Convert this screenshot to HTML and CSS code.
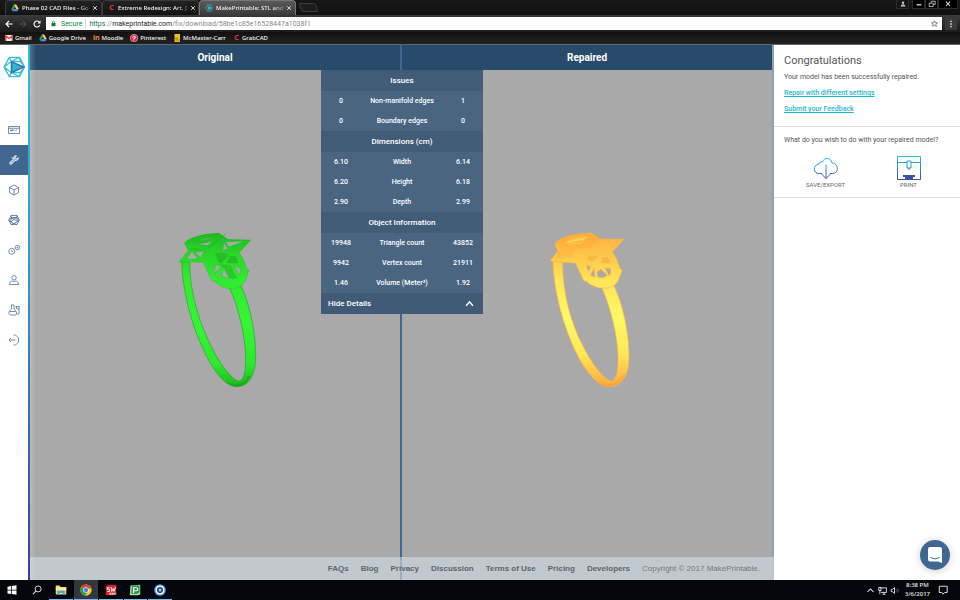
FILE: index.html
```html
<!DOCTYPE html>
<html lang="en">
<head>
<meta charset="utf-8">
<title>MakePrintable: STL and 3D model repair</title>
<link rel="stylesheet" href="styles.css">
</head>
<body>
<svg class="defs" aria-hidden="true">
  <defs>
    <linearGradient id="brand" x1="0" y1="0" x2="0" y2="1"><stop offset="0" stop-color="#1fc3dc"/><stop offset="1" stop-color="#3e4fa8"/></linearGradient>
    <linearGradient id="green" gradientUnits="userSpaceOnUse" x1="0" y1="20" x2="0" y2="490"><stop offset="0" stop-color="#1fb41f"/><stop offset=".12" stop-color="#27d227"/><stop offset=".3" stop-color="#30ea30"/><stop offset=".6" stop-color="#35f635"/><stop offset=".85" stop-color="#2de82d"/><stop offset="1" stop-color="#1db51d"/></linearGradient>
    <linearGradient id="gold" gradientUnits="userSpaceOnUse" x1="0" y1="20" x2="0" y2="490"><stop offset="0" stop-color="#ffad3c"/><stop offset=".15" stop-color="#ffc648"/><stop offset=".33" stop-color="#ffe65a"/><stop offset=".55" stop-color="#fff966"/><stop offset=".78" stop-color="#ffe858"/><stop offset="1" stop-color="#ffa63c"/></linearGradient>
    <symbol id="drive" viewBox="0 0 16 16"><path d="M5.500 1h5l5 9h-5z" fill="#ffd04b"/><path d="M5.500 1 0.500 10 3 14.500 8 5.500z" fill="#1ea362"/><path d="M5.500 10h10L13 14.500H3z" fill="#4688f4"/></symbol>
    <symbol id="close" viewBox="0 0 8 8"><path d="M1.500 1.500l5 5M6.500 1.500l-5 5" stroke="currentColor" stroke-width="1.100"/></symbol>
    <symbol id="poly" viewBox="0 0 24 24"><path d="M1 12 7 1.500h11L23.500 12 18 22.500H7zM1 12 9 6l9-4.500 1 4.500 4.500 6-4.500 6-1 4.500L9 18zM7 1.500 9 6l10 0M7 22.500 9 18h10M9 6v12" fill="none" stroke="#37bfd9" stroke-linejoin="round"/><path d="M9.500 6.500 23 12 9.500 18z" fill="#28b9d5"/></symbol>
  </defs>
</svg>

<header class="browser">
  <div class="tabs">
    <div class="tab">
      <svg class="favicon"><use href="#drive"/></svg><span class="tab-title">Phase 02 CAD Files - Go</span>
      <button class="tab-close" aria-label="Close tab"><svg><use href="#close"/></svg></button>
    </div>
    <div class="tab">
      <b class="favicon letter">C</b><span class="tab-title">Extreme Redesign: Art, J</span>
      <button class="tab-close" aria-label="Close tab"><svg><use href="#close"/></svg></button>
    </div>
    <div class="tab tab-active">
      <svg class="favicon"><use href="#poly"/></svg><span class="tab-title">MakePrintable: STL and</span>
      <button class="tab-close" aria-label="Close tab"><svg><use href="#close"/></svg></button>
    </div>
    <button class="new-tab" aria-label="New tab"></button>
    <div class="window-buttons">
      <button class="win-user" aria-label="Profile"><svg viewBox="0 0 12 10"><circle cx="6" cy="3.500" r="1.500" fill="#ccc"/><path d="M3 8c0-3 6-3 6 0z" fill="#ccc"/></svg></button>
      <button aria-label="Minimize"><svg viewBox="0 0 12 10"><path d="M3 6h6" stroke="#ddd" stroke-width="1.600"/></svg></button>
      <button aria-label="Restore"><svg viewBox="0 0 12 10"><path d="M5 3.500V1.500h5v4H8M2.500 4h5v4h-5z" fill="none" stroke="#bbb" stroke-width="1.200"/></svg></button>
      <button class="win-close" aria-label="Close"><svg viewBox="0 0 12 10"><path d="M3.500 2l5 5.500M8.500 2l-5 5.500" stroke="#ddd" stroke-width="1.300"/></svg></button>
    </div>
  </div>

  <div class="toolbar">
    <button class="nav" aria-label="Back"><svg viewBox="0 0 16 16"><path d="M15 8H2M8 2 2 8l6 6" fill="none" stroke="#fff" stroke-width="2.200"/></svg></button>
    <button class="nav" aria-label="Forward"><svg viewBox="0 0 16 16"><path d="M1 8h13M8 2l6 6-6 6" fill="none" stroke="#555" stroke-width="2"/></svg></button>
    <button class="nav" aria-label="Reload"><svg viewBox="0 0 16 16"><path d="M13.500 10.500A6 6 0 1 1 12.500 4" fill="none" stroke="#fff" stroke-width="2.200"/><path d="M9 7h6V1z" fill="#fff"/></svg></button>
    <div class="address">
      <svg class="lock" viewBox="0 0 10 12"><path d="M1 5h8v6.500H1z" fill="#0b8043"/><path d="M3 5V3a2 2 0 0 1 4 0v2" fill="none" stroke="#0b8043" stroke-width="1.400"/></svg>
      <span class="secure">Secure</span>
      <div class="url" role="textbox" aria-label="Address" contenteditable="true" spellcheck="false"><span class="scheme">https</span>://<span class="host">makeprintable.com</span>/fix/download/58be1c85e16528447a1038f1</div>
      <button class="star" aria-label="Bookmark this page"><svg viewBox="0 0 16 16"><path d="M8 1.500l2 4.500 4.800.5-3.600 3.200 1 4.800L8 12l-4.200 2.500 1-4.800L1.200 6.500 6 6z" fill="none" stroke="#555" stroke-width="1.600"/></svg></button>
    </div>
    <button class="menu" aria-label="Menu"><svg viewBox="0 0 12 12"><path d="M5 1h2v2H5zM5 5h2v2H5zM5 9h2v2H5z" fill="#fff"/></svg></button>
  </div>

  <nav class="bookmarks" aria-label="Bookmarks">
    <a href="#"><svg viewBox="0 0 16 16"><path d="M0 2h16v12H0z" fill="#eee"/><path d="M1.500 14V3.500L8 9l6.500-5.500V14" fill="none" stroke="#d93f35" stroke-width="2.500"/></svg>Gmail</a>
    <a href="#"><svg><use href="#drive"/></svg>Google Drive</a>
    <a href="#"><b class="moodle">in</b>Moodle</a>
    <a href="#"><svg viewBox="0 0 16 16"><circle cx="8" cy="8" r="7.500" fill="#d51f32" stroke="#eee"/><path d="M7 13l2-8M5 8C4 3 12 3 11 7c-.500 3-3 3-3 1" fill="none" stroke="#fff" stroke-width="1.500"/></svg>Pinterest</a>
    <a href="#"><svg viewBox="0 0 16 16"><path d="M3 0h11v16H3z" fill="#f5c315"/><path d="M4 8h6M5 12h8" stroke="#7b5a00" stroke-width="1.500"/></svg>McMaster-Carr</a>
    <a href="#"><b class="letter">C</b>GrabCAD</a>
  </nav>
</header>

<div class="app">
  <nav class="rail" aria-label="Main">
    <a class="logo" href="#" aria-label="MakePrintable"><svg><use href="#poly"/></svg></a>
    <a href="#" aria-label="Dashboard"><svg viewBox="0 0 24 24"><path d="M1 5h22v14H1zM1 8.500h22M4 12h9M4 13.500h6M15 13l3-2" /></svg></a>
    <a class="current" href="#" aria-label="Repair"><svg viewBox="0 0 24 24"><path d="M4 20c-1.500-1.500-1-2.500 0-3.500l7-6C10 6 13 2.500 17 3.500l-2.500 3 .5 2.500 3 .5 2.500-2.500c1 4-2.500 7-6.500 6l-6.500 7c-1 1-2.300 1.200-3.500 0z" fill="#9fb4cc"/><path d="M7 6l3 4"/></svg></a>
    <a href="#" aria-label="Models"><svg viewBox="0 0 24 24"><path d="M12 2l9 5v10l-9 5-9-5V7zM3 7l9 5 9-5M12 12v10"/></svg></a>
    <a href="#" aria-label="Mesh"><svg viewBox="0 0 24 24"><path d="M1.500 12 6 3h12l4.500 9L18 21H6zM6 3l1 5 10-1 1-4M7 8l-2 8 7 3 7-4-2-8zM7 8l12 7M5 16 17 7M6 21l6-2 6 2M1.500 12 7 8M22.500 12 17 7M1.500 12 5 16M22.500 12 19 15"/></svg></a>
    <a href="#" aria-label="Settings"><svg viewBox="0 0 24 24"><circle cx="7.500" cy="14.500" r="6"/><path d="M7.500 12v3H10"/><circle cx="19" cy="7" r="4.500"/><circle cx="19" cy="7" r="1"/></svg></a>
    <a href="#" aria-label="Account"><svg viewBox="0 0 24 24"><circle cx="12" cy="7.500" r="4.500"/><path d="M3 21c0-5 3-7 6-7l3 1 3-1c3 0 6 2 6 7z"/></svg></a>
    <a href="#" aria-label="Labs"><svg viewBox="0 0 24 24"><path d="M6 2h6M7 2v8c-7 5-6 12-2 12h9c5 0 4-7-2-12V2M4 15h11M15 5h8M17 5v5M22 5v14c0 2-4 2-5 0M18 10h4"/></svg></a>
    <a href="#" aria-label="Log out"><svg viewBox="0 0 24 24"><path d="M11 2h4l6 6v8l-6 6h-4M15 12H2M6 8l-4 4 4 4"/></svg></a>
  </nav>

  <main class="viewer">
    <section class="view">
      <h2>Original</h2>
      <svg class="ring" viewBox="-46 1 360 600" role="img" aria-label="Original ring model">
        <path d="M34 105C34 190 64 305 104 385C134 446 166 485 198 486C238 486 254 448 256 402C258 334 238 236 212 184L178 190C206 252 224 332 226 394C227 440 221 466 206 469C186 466 156 428 128 376C88 300 58 206 58 112z" fill="url(#green)" stroke="#23a826" stroke-width="2"/>
        <path d="M166 470c25 14 56 8 64-14l12-5c-10 34-51 49-76 19z" fill="#169f18" opacity=".5"/>
        <path d="M162 135l18-8 22 40-18 6z" fill="#25c525"/>
        <path fill-rule="evenodd" d="M42 55Q66 29 146 25L172 44 242 46 206 84Q220 100 230 134L236 136 230 154Q224 190 182 193 152 191 130 167L126 171 98 113 26 111 54 78zM70 52Q98 41 132 37L112 43Q90 46 70 52zM82 60L126 49 112 62zM64 80L49 103 84 103zM74 82L91 99 101 80zM166 51L176 67 222 50zM161 54L157 78 173 73zM138 120L153 126 135 144Q129 132 138 120zM191 125L208 129Q214 142 208 151zM160 132L179 126 198 155Q180 166 153 155zM135 151L143 143 146 157z" fill="url(#green)" stroke="#1fb722"/>
        <path d="M134 87Q148 80 174 90L154 116 144 112zM180 94L196 95 204 116 168 115z" fill="#25bd27"/>
        <path d="M150 119l30 2 20 38-14 5z" fill="#27cc28"/>
        <path d="M112 72l54-44M62 72l34 4" fill="none" stroke="#1caf20" stroke-width="2"/>
      </svg>
    </section>
    <section class="view">
      <h2>Repaired</h2>
      <svg class="ring" viewBox="-38 1 360 600" role="img" aria-label="Repaired ring model">
        <path d="M40 108C40 190 70 304 110 385C140 446 176 485 208 486C248 486 268 448 268 402C270 334 250 236 222 182L187 190C214 252 233 332 235 394C236 440 230 466 216 470C196 466 164 428 136 376C94 300 69 206 69 114z" fill="url(#gold)" stroke="#f7b04a" stroke-width="2"/>
        <path d="M176 470c25 14 58 8 66-14l14-8c-10 37-55 52-80 22z" fill="#ff9c38" opacity=".5"/>
        <path fill-rule="evenodd" d="M46 55Q70 29 154 25L182 43 252 44 218 82Q232 100 242 134L248 137 240 156Q232 190 192 191 160 190 138 168L133 170 108 116 32 109 54 80zM141 122L154 126 146 141zM152 152L163 131 166 158zM196 130L213 132Q216 145 208 153zM172 141L184 134 203 151Q192 164 173 156z" fill="url(#gold)" stroke="#ffb444" stroke-width="2"/>
        <path d="M46 55Q70 29 154 25L182 43 150 70 108 72 94 98 46 104 60 68z" fill="#ff9d31" opacity=".25"/>
        <path d="M80 53q25-16 62-17l-20 20-32 2zM144 91l38 1-24 20-16-8zM188 95l18 1 8 22-32-3z" fill="#f9b841" stroke="#ffcf55" stroke-width="2"/>
        <path d="M84 52l50-10" fill="none" stroke="#ffd75a" stroke-width="4"/>
      </svg>
    </section>

    <div class="details">
      <table>
        <colgroup><col class="value"><col><col class="value"></colgroup>
        <tbody>
          <tr><th colspan="3">Issues</th></tr>
          <tr><td>0</td><td>Non-manifold edges</td><td>1</td></tr>
          <tr><td>0</td><td>Boundary edges</td><td>0</td></tr>
        </tbody>
        <tbody>
          <tr><th colspan="3">Dimensions (cm)</th></tr>
          <tr><td>6.10</td><td>Width</td><td>6.14</td></tr>
          <tr><td>6.20</td><td>Height</td><td>6.18</td></tr>
          <tr><td>2.90</td><td>Depth</td><td>2.99</td></tr>
        </tbody>
        <tbody>
          <tr><th colspan="3">Object Information</th></tr>
          <tr><td>19948</td><td>Triangle count</td><td>43852</td></tr>
          <tr><td>9942</td><td>Vertex count</td><td>21911</td></tr>
          <tr><td>1.46</td><td>Volume (Meter³)</td><td>1.92</td></tr>
        </tbody>
      </table>
      <button class="toggle">Hide Details<svg viewBox="0 0 8 8"><path d="M1 6l3-3.500L7 6" fill="none" stroke="#fff" stroke-width="1.300"/></svg></button>
    </div>

    <footer class="links">
      <a href="#">FAQs</a><a href="#">Blog</a><a href="#">Privacy</a><a href="#">Discussion</a><a href="#">Terms of Use</a><a href="#">Pricing</a><a href="#">Developers</a>
      <span>Copyright © 2017 MakePrintable.</span>
    </footer>
  </main>

  <aside class="side">
    <section class="result">
      <h1>Congratulations</h1>
      <p>Your model has been successfully repaired.</p>
      <a href="#">Repair with different settings</a>
      <a href="#">Submit your Feedback</a>
    </section>
    <section class="next">
      <p>What do you wish to do with your repaired model?</p>
      <div class="actions">
        <button><svg viewBox="0 0 24 24"><path d="M8 17.500H5a4.500 4.500 0 0 1-.5-9C5 6 7 5.500 8.500 6 10 1 17 1 18 7c7 0 7 10.500.5 10.500H16M12 8.500v14M7 17.500l5 5 5-5" fill="none" stroke="url(#brand)" stroke-width="1"/></svg>SAVE/EXPORT</button>
        <button><svg viewBox="0 0 24 24"><path d="M.5.5h23v23H.5zM1 6.500h9M14 6.500h9M10 5h4v7h-4zM12 12v2" fill="none" stroke="url(#brand)" stroke-width="1"/><path d="M6 19h12v2h-2v2.500H8V21H6z" fill="#3d53a8"/></svg>PRINT</button>
      </div>
    </section>
    <button class="chat" aria-label="Open chat"><svg viewBox="0 0 16 18"><path d="M3 1h10a2 2 0 0 1 2 2v14l-4-1.500H3a2 2 0 0 1-2-2V3a2 2 0 0 1 2-2z" fill="#fff"/><path d="M3.500 11.500q4.500 3 9 0" fill="none" stroke="#3f6792" stroke-width="1"/></svg></button>
  </aside>
</div>

<footer class="taskbar">
  <div class="apps">
    <button aria-label="Start"><svg viewBox="0 0 16 16"><path d="M2 3.500l5-.7v4.700H2zM8 2.600l6-.8v5.700H8zM2 8.500h5v4.700l-5-.7zM8 8.500h6v5.700l-6-.8z" fill="#fff"/></svg></button>
    <button aria-label="Search"><svg viewBox="0 0 16 16"><circle cx="9.500" cy="6.500" r="4" fill="none" stroke="#ddd" stroke-width="1.300"/><path d="M6.500 9.500 2.500 13.500" stroke="#ddd" stroke-width="1.500"/></svg></button>
    <button class="open" aria-label="File Explorer"><svg viewBox="0 0 16 16"><path d="M1 2h5l1.500 2H15v10H1z" fill="#f7d774"/><path d="M1 5h14v3H1z" fill="#ffe9a0"/><path d="M3 9h10v5h-2.500v-2h-5v2H3z" fill="#3fa9dc"/></svg></button>
    <button class="open focused" aria-label="Chrome"><svg viewBox="0 0 16 16"><circle cx="8" cy="8" r="7.500" fill="#f7c92f"/><path d="M8 8 1.500 4.200A7.500 7.500 0 0 1 14.500 4.200z" fill="#dd4637"/><path d="M8 8 1.500 4.200A7.500 7.500 0 0 0 7 15.500l3-5z" fill="#2b9f50"/><path d="M8 4.200h6.500l.8 1.800H8z" fill="#dd4637"/><circle cx="8" cy="8" r="3.600" fill="#fff"/><circle cx="8" cy="8" r="2.900" fill="#4384ec"/></svg></button>
    <button class="open" aria-label="SolidWorks 2016"><svg viewBox="0 0 16 16"><path d="M1 3l3-2h11v11l-3 3H1z" fill="#d32530"/><path d="M6 5H3v2h3v3H3M8 4l1 6 2-4 1 4 2-6" fill="none" stroke="#fff" stroke-width="1.200"/><path d="M6 13h9" stroke="#ddd" stroke-width="2.500" stroke-dasharray="2 .6"/></svg></button>
    <button class="open" aria-label="Print tool"><svg viewBox="0 0 16 16"><path d="M2 2l13-1v13l-3 1H1z" fill="#b9d7b4"/><path d="M4 2h10v9l-3 2H3z" fill="#1f9a3f"/><path d="M6 12V5h3.500c3 0 3 4 0 4H6" fill="none" stroke="#fff" stroke-width="1.600"/></svg></button>
    <button class="open" aria-label="Viewer"><svg viewBox="0 0 16 16"><circle cx="8" cy="8" r="7.800" fill="#3b92ea"/><circle cx="8" cy="8" r="5" fill="#16334f" stroke="#fff" stroke-width="2"/><circle cx="8" cy="8" r="2.200" fill="#8ec5f7"/></svg></button>
  </div>
  <div class="tray">
    <svg viewBox="0 0 12 12"><path d="M2 8l4-4 4 4" fill="none" stroke="#eee" stroke-width="1.400"/></svg>
    <svg viewBox="0 0 12 12"><path d="M3 2.500h8.500v6H4M6 11h4M8 8.500V11M1 2h3v4H1zM2.500 6v5" fill="none" stroke="#eee" stroke-width="1.200"/></svg>
    <svg viewBox="0 0 12 12"><path d="M1.500 4.500h2L6 2v8L3.500 7.500h-2z" fill="none" stroke="#eee" stroke-width="1.100"/><path d="M8 4.500q1 1.500 0 3M10 3q2 3 0 6" fill="none" stroke="#777"/></svg>
    <time>8:38 PM<br>3/6/2017</time>
    <svg class="notice" viewBox="0 0 12 12"><path d="M1.500 1.500h9.500v7.500H8L6 11 4.500 9h-3z" fill="none" stroke="#eee" stroke-width="1.100"/></svg>
  </div>
</footer>
</body>
</html>
```
FILE: styles.css
```css
* { box-sizing: border-box; }
body {
  margin: 0;
  height: 100vh;
  display: flex;
  flex-direction: column;
  overflow: hidden;
  font: 7px/10px Roboto, sans-serif;
  color: #555;
}
button { border: 0; padding: 0; background: none; font: inherit; color: inherit; }
a { color: inherit; text-decoration: none; }
h1, h2, p { margin: 0; }
svg { display: block; flex: none; }
.defs { position: absolute; width: 0; height: 0; }

/* Browser frame */
.browser { background: #161616; color: #f4f4f4; border-bottom: 1px solid #666; }
.tabs, .bookmarks, .tray { font-family: "Noto Sans", sans-serif; font-size: 6px; font-weight: 500; }
.tabs { display: flex; height: 15px; padding-left: 5px; background: linear-gradient(#181818, #101010); }
.tab {
  display: flex;
  align-items: center;
  gap: 3px;
  width: 97px;
  padding: 0 4px 0 5px;
  background: linear-gradient(#222, #141414);
  border: 1px solid #3a3a3a;
  border-bottom: 0;
  border-radius: 4px 4px 0 0;
}
.tab-active { background: linear-gradient(#5a5a5a, #3a3a3a); border-color: #777; }
.favicon { width: 8px; height: 8px; flex: none; }
.letter { width: 7px; flex: none; text-align: center; line-height: 8px; font-size: 7px; color: #e8392d; }
.tab-title {
  flex: 1;
  white-space: nowrap;
  -webkit-mask-image: linear-gradient(90deg, #000 85%, rgba(0, 0, 0, .3));
  mask-image: linear-gradient(90deg, #000 85%, rgba(0, 0, 0, .3));
}
.tab-close svg { width: 6px; height: 6px; }
.new-tab { width: 17px; height: 9px; margin: 3px 0 0 4px; border: 1px solid #3c3c3c; border-radius: 2px; background: #1c1c1c; transform: skewX(20deg); }
.window-buttons { display: flex; margin-left: auto; padding-right: 2px; height: 9px; }
.window-buttons button { width: 13px; display: flex; justify-content: center; background: #000; border: 1px solid #2c2c2c; border-top: 0; }
.window-buttons svg { width: 10px; height: 8px; }
.window-buttons .win-user { margin-right: 3px; background: #161616; }
.window-buttons .win-close { width: 20px; }

.toolbar { display: flex; align-items: center; height: 17px; padding: 0 3px 0 2px; background: linear-gradient(#3a3a3a, #1b1b1b); }
.nav { width: 14px; display: flex; justify-content: center; }
.nav svg { width: 8px; height: 8px; }
.address { flex: 1; display: flex; align-items: center; height: 13px; margin-left: 2px; padding: 0 4px 0 5px; background: #fff; color: #888; }
.lock { width: 5px; height: 7px; margin-right: 5px; }
.secure { color: #0b8043; padding-right: 3px; margin-right: 3px; border-right: 1px solid #ddd; }
.url { flex: 1; white-space: nowrap; outline: 0; }
.scheme { color: #0b8043; }
.host { color: #222; }
.star svg { width: 7px; height: 7px; }
.menu { width: 12px; height: 12px; margin-left: 3px; display: flex; align-items: center; justify-content: center; background: #3a3a3a; }
.menu svg { width: 8px; height: 8px; }

.bookmarks { display: flex; align-items: center; gap: 7px; height: 12px; padding-left: 5px; background: linear-gradient(#111, #222); }
.bookmarks a { display: flex; align-items: center; gap: 2px; }
.bookmarks svg { width: 8px; height: 8px; }
.moodle { color: #f08a24; font-size: 7px; }

/* Application */
.app { flex: 1; display: flex; min-height: 0; background: #fff; }
.rail {
  width: 30px;
  display: flex;
  flex-direction: column;
  border-right: 2px solid;
  border-image: linear-gradient(#27c5d6, #3a93bf 45%, #3a3f9c) 1;
}
.rail a { height: 30px; display: flex; align-items: center; justify-content: center; }
.rail a svg { width: 12px; height: 12px; fill: none; stroke: #44699a; stroke-width: 1.5; }
.rail a.logo { height: 44px; margin-bottom: 26px; }
.rail a.logo svg { width: 22px; height: 22px; }
.rail a.current { background: #3f6792; }
.rail a.current svg { stroke: #fff; }

.viewer { flex: 1; position: relative; display: flex; background: #a9a9a9; }
.viewer::before { content: ""; position: absolute; inset: 0 auto 0 0; width: 6px; background: linear-gradient(90deg, rgba(255, 255, 255, .2), transparent); }
.view { flex: 1; display: flex; flex-direction: column; border-right: 2px solid #3f6792; }
.view + .view { border-right-color: #8fa0b1; }
.view h2 { height: 25px; background: #294b6b; color: #fff; font-size: 10px; line-height: 25px; font-weight: 700; text-align: center; }
.ring { width: 120px; height: 200px; margin: auto; }

.details { position: absolute; top: 25px; left: 0; right: 0; width: 162px; margin: 0 auto; background: #4a657f; color: #fff; font-weight: 500; }
.details table { width: 100%; border-collapse: collapse; table-layout: fixed; text-align: center; }
.details .value { width: 40px; }
.details th, .details td { padding: 0; }
.details th { height: 21px; background: #415c77; font-size: 8px; font-weight: 500; }
.details td { height: 20px; white-space: nowrap; }
.toggle { width: 100%; height: 21px; display: flex; align-items: center; justify-content: space-between; padding: 0 9px 0 7px; background: #3f5b76; font-size: 8px; font-weight: 500; }
.toggle svg { width: 9px; height: 9px; }

.links {
  position: absolute;
  inset: auto 0 0 0;
  height: 23px;
  display: flex;
  align-items: center;
  justify-content: flex-end;
  gap: 12px;
  padding-right: 14px;
  background: rgba(212, 224, 232, .6);
  color: #777;
  font: 8px/12px "Liberation Sans", sans-serif;
}
.links a { color: #606469; font-weight: 700; }

.side { width: 186px; position: relative; }
.result { display: flex; flex-direction: column; align-items: flex-start; gap: 6px; padding: 10px 10px 12px; border-bottom: 1px solid #ddd; }
.result h1 { font-size: 11px; line-height: 12px; font-weight: 400; margin-bottom: -1px; }
.result a { color: #1cb8d2; text-decoration: underline; font-weight: 500; }
.next { padding: 8px 10px 7px; border-bottom: 1px solid #ddd; }
.actions { display: grid; grid-template-columns: 1fr 1fr; margin-top: 11px; }
.actions button { display: flex; flex-direction: column; align-items: center; font-size: 6px; color: #666; }
.actions svg { width: 24px; height: 24px; }
.chat { position: absolute; right: 10px; bottom: 10px; width: 30px; height: 30px; display: flex; align-items: center; justify-content: center; border-radius: 50%; background: #3f6792; box-shadow: 0 1px 8px rgba(0, 0, 0, .2); }
.chat svg { width: 16px; height: 18px; }

/* Desktop taskbar */
.taskbar { display: flex; height: 20px; background: #03060b; color: #eee; }
.apps { width: 172px; display: grid; grid-template-columns: repeat(7, 1fr); column-gap: 1px; }
.apps button { display: flex; align-items: center; justify-content: center; border-bottom: 1px solid transparent; }
.apps svg { width: 12px; height: 12px; }
.apps .open { border-bottom-color: #76b9ed; }
.apps .focused { background: #34373b; }
.tray { display: flex; align-items: center; gap: 3px; margin-left: auto; padding-right: 12px; }
.tray svg { width: 9px; height: 9px; }
.tray time { margin: 0 5px 0 3px; line-height: 9px; text-align: center; }
.tray .notice { width: 10px; height: 10px; }
```
